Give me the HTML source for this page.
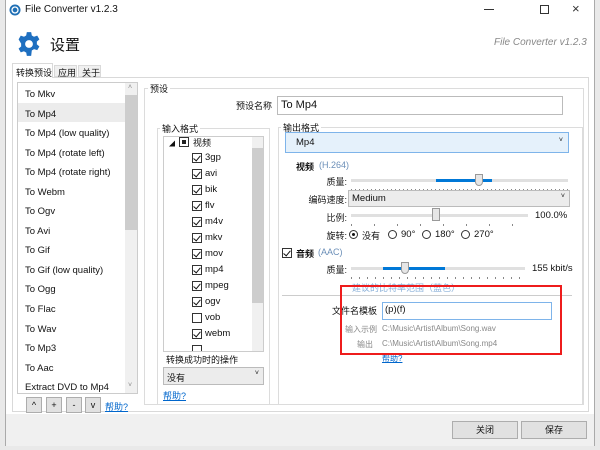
<!DOCTYPE html>
<html><head><meta charset="utf-8"><style>
*{margin:0;padding:0;box-sizing:border-box}
body{width:600px;height:450px;background:#e9e9e9;position:relative;overflow:hidden;font-family:"Liberation Sans","Noto Sans CJK SC",sans-serif;font-size:9px;color:#111}
.a{position:absolute;white-space:nowrap}
.win{position:absolute;left:5px;top:0;width:590px;height:446px;background:#fff;border:1px solid #aaa;border-top:none}
.grp{position:absolute;border:1px solid #dcdcdc}
.lbl{position:absolute;background:#fff;padding:0 2px;font-size:9px}
.chk{position:absolute;width:10px;height:10px;border:1px solid #333;background:#fff}
.chk.on::after{content:"";position:absolute;left:2px;top:0px;width:3px;height:6px;border:solid #111;border-width:0 1.5px 1.5px 0;transform:rotate(40deg)}
.btn{position:absolute;background:#e1e1e1;border:1px solid #adadad;text-align:center;font-size:9px}
.link{color:#0066cc;text-decoration:underline}
.gr{color:#888}
.r{text-align:right}
</style></head><body>
<div class="win"></div>
<svg class="a" style="left:9px;top:4px" width="12" height="12" viewBox="0 0 12 12"><circle cx="6" cy="6" r="5.5" fill="#1f6fb5"/><circle cx="6" cy="6" r="3" fill="none" stroke="#fff" stroke-width="1.3"/></svg>
<div class="a" style="left:25px;top:4px;font-size:10px">File Converter v1.2.3</div>
<div class="a" style="left:484px;top:9px;width:10px;height:1px;background:#333"></div>
<div class="a" style="left:540px;top:5px;width:9px;height:9px;border:1px solid #333"></div>
<div class="a" style="left:572px;top:1px;font-size:13px;color:#333">×</div>
<svg class="a" style="left:16px;top:31px" width="26" height="26" viewBox="0 0 24 24"><path fill="#1e6fc0" d="M10 1h4l.6 3.1a8 8 0 0 1 2 1.2l3-1 2 3.4-2.4 2.1a8 8 0 0 1 0 2.4l2.4 2.1-2 3.4-3-1a8 8 0 0 1-2 1.2L14 23h-4l-.6-3.1a8 8 0 0 1-2-1.2l-3 1-2-3.4 2.4-2.1a8 8 0 0 1 0-2.4L2.4 7.7l2-3.4 3 1a8 8 0 0 1 2-1.2z"/><circle cx="12" cy="12" r="3.6" fill="#fff"/></svg>
<div class="a" style="left:50px;top:34px;font-size:15px">设置</div>
<div class="a" style="left:494px;top:37px;font-size:10px;font-style:italic;color:#888">File Converter v1.2.3</div>
<div class="a" style="left:12px;top:77px;width:577px;height:335px;border:1px solid #d9d9d9"></div>
<div class="a" style="left:12px;top:63px;width:41px;height:15px;border:1px solid #d9d9d9;border-bottom:none;background:#fff;font-size:9px;padding:2px 0 0 3px">转换预设</div>
<div class="a" style="left:54px;top:65px;width:23px;height:12px;border:1px solid #d9d9d9;background:#f0f0f0;font-size:9px;padding:0 0 0 3px">应用</div>
<div class="a" style="left:78px;top:65px;width:23px;height:12px;border:1px solid #d9d9d9;background:#f0f0f0;font-size:9px;padding:0 0 0 3px">关于</div>
<div class="a" style="left:17px;top:82px;width:121px;height:312px;border:1px solid #ccc"></div>
<div class="a" style="left:18px;top:103px;width:107px;height:19px;background:#ececec"></div>
<div class="a" style="left:125px;top:83px;width:12px;height:310px;background:#f0f0f0"></div>
<div class="a" style="left:125px;top:95px;width:12px;height:135px;background:#cdcdcd"></div>
<div class="a gr" style="left:128px;top:84px;font-size:7px">˄</div>
<div class="a gr" style="left:128px;top:382px;font-size:7px">˅</div>
<div class="a" style="left:25px;top:85px;line-height:19.55px;font-size:9.5px">To Mkv<br>To Mp4<br>To Mp4 (low quality)<br>To Mp4 (rotate left)<br>To Mp4 (rotate right)<br>To Webm<br>To Ogv<br>To Avi<br>To Gif<br>To Gif (low quality)<br>To Ogg<br>To Flac<br>To Wav<br>To Mp3<br>To Aac<br>Extract DVD to Mp4</div>
<div class="btn" style="left:26px;top:397px;width:16px;height:16px;line-height:14px">^</div>
<div class="btn" style="left:46px;top:397px;width:16px;height:16px;line-height:14px">+</div>
<div class="btn" style="left:66px;top:397px;width:16px;height:16px;line-height:14px">-</div>
<div class="btn" style="left:85px;top:397px;width:16px;height:16px;line-height:14px">v</div>
<div class="a link" style="left:105px;top:400px">帮助?</div>
<div class="grp" style="left:144px;top:88px;width:440px;height:317px"></div>
<div class="lbl" style="left:148px;top:82px">预设</div>
<div class="a" style="left:236px;top:99px;font-size:9px">预设名称</div>
<div class="a" style="left:277px;top:96px;width:286px;height:19px;border:1px solid #bbb;font-size:11px;padding:2px 0 0 3px">To Mp4</div>
<div class="grp" style="left:157px;top:128px;width:113px;height:277px"></div>
<div class="lbl" style="left:160px;top:122px">输入格式</div>
<div class="a" style="left:163px;top:136px;width:101px;height:216px;border:1px solid #ccc;overflow:hidden"></div>
<div class="a" style="left:252px;top:137px;width:11px;height:214px;background:#f0f0f0"></div>
<div class="a" style="left:252px;top:148px;width:11px;height:155px;background:#cdcdcd"></div>
<div class="a" style="left:169px;top:139px;font-size:6px">◢</div>
<div class="a" style="left:179px;top:137px;width:10px;height:10px;border:1px solid #333"><div style="margin:2px;width:4px;height:4px;background:#222"></div></div>
<div class="a" style="left:193px;top:136px;font-size:9px">视频</div>
<div class="chk on" style="left:192px;top:153px"></div><div class="a" style="left:205px;top:152px;font-size:9.5px">3gp</div>
<div class="chk on" style="left:192px;top:169px"></div><div class="a" style="left:205px;top:168px;font-size:9.5px">avi</div>
<div class="chk on" style="left:192px;top:185px"></div><div class="a" style="left:205px;top:184px;font-size:9.5px">bik</div>
<div class="chk on" style="left:192px;top:201px"></div><div class="a" style="left:205px;top:200px;font-size:9.5px">flv</div>
<div class="chk on" style="left:192px;top:217px"></div><div class="a" style="left:205px;top:216px;font-size:9.5px">m4v</div>
<div class="chk on" style="left:192px;top:233px"></div><div class="a" style="left:205px;top:232px;font-size:9.5px">mkv</div>
<div class="chk on" style="left:192px;top:249px"></div><div class="a" style="left:205px;top:248px;font-size:9.5px">mov</div>
<div class="chk on" style="left:192px;top:265px"></div><div class="a" style="left:205px;top:264px;font-size:9.5px">mp4</div>
<div class="chk on" style="left:192px;top:281px"></div><div class="a" style="left:205px;top:280px;font-size:9.5px">mpeg</div>
<div class="chk on" style="left:192px;top:297px"></div><div class="a" style="left:205px;top:296px;font-size:9.5px">ogv</div>
<div class="chk" style="left:192px;top:313px"></div><div class="a" style="left:205px;top:312px;font-size:9.5px">vob</div>
<div class="chk on" style="left:192px;top:329px"></div><div class="a" style="left:205px;top:328px;font-size:9.5px">webm</div>
<div class="a" style="left:192px;top:345px;width:10px;height:6px;border:1px solid #333;border-bottom:none"></div>
<div class="a" style="left:166px;top:353px;font-size:9px">转换成功时的操作</div>
<div class="a" style="left:163px;top:367px;width:101px;height:18px;border:1px solid #bbb;background:#ececec;font-size:9px;padding:3px 0 0 3px">没有<span style="position:absolute;right:4px;top:2px;font-size:7px">˅</span></div>
<div class="a link" style="left:163px;top:389px">帮助?</div>
<div class="grp" style="left:278px;top:127px;width:305px;height:278px"></div>
<div class="lbl" style="left:281px;top:121px">输出格式</div>
<div class="a" style="left:285px;top:132px;width:284px;height:21px;border:1px solid #7eb4ea;background:#e5f1fb;font-size:9.5px;padding:4px 0 0 10px">Mp4<span style="position:absolute;right:5px;top:4px;font-size:7px">˅</span></div>
<div class="a" style="left:296px;top:160px;font-size:9px;font-weight:bold">视频</div>
<div class="a" style="left:319px;top:160px;font-size:9px;color:#6b8fb8">(H.264)</div>
<div class="a r" style="left:300px;top:175px;width:47px">质量:</div>
<div class="a" style="left:351px;top:179px;width:217px;height:3px;background:#e0e0e0"></div>
<div class="a" style="left:436px;top:179px;width:56px;height:3px;background:#0078d7"></div>
<div class="a" style="left:475px;top:174px;width:8px;height:12px;background:#e6e6e6;border:1px solid #999;border-radius:0 0 4px 4px"></div>
<div class="a" style="left:351px;top:189px;width:217px;height:2px;background:repeating-linear-gradient(90deg,#888 0 1px,transparent 1px 4px)"></div>
<div class="a r" style="left:290px;top:193px;width:57px">编码速度:</div>
<div class="a" style="left:348px;top:190px;width:222px;height:17px;border:1px solid #bbb;background:#ececec;font-size:9.5px;padding:2px 0 0 3px">Medium<span style="position:absolute;right:4px;top:2px;font-size:7px">˅</span></div>
<div class="a r" style="left:300px;top:211px;width:47px">比例:</div>
<div class="a" style="left:351px;top:214px;width:177px;height:3px;background:#e0e0e0"></div>
<div class="a" style="left:432px;top:208px;width:8px;height:13px;background:#e6e6e6;border:1px solid #999"></div>
<div class="a" style="left:351px;top:224px;width:177px;height:2px;background:repeating-linear-gradient(90deg,#888 0 1px,transparent 1px 23px)"></div>
<div class="a" style="left:535px;top:210px;font-size:9.5px">100.0%</div>
<div class="a r" style="left:300px;top:229px;width:47px">旋转:</div>
<div class="a" style="left:349px;top:230px;width:9px;height:9px;border:1px solid #333;border-radius:50%"><div style="margin:2px;width:3px;height:3px;border-radius:50%;background:#111"></div></div>
<div class="a" style="left:362px;top:229px">没有</div>
<div class="a" style="left:388px;top:230px;width:9px;height:9px;border:1px solid #333;border-radius:50%"></div><div class="a" style="left:401px;top:229px;font-size:9.5px">90°</div>
<div class="a" style="left:422px;top:230px;width:9px;height:9px;border:1px solid #333;border-radius:50%"></div><div class="a" style="left:435px;top:229px;font-size:9.5px">180°</div>
<div class="a" style="left:461px;top:230px;width:9px;height:9px;border:1px solid #333;border-radius:50%"></div><div class="a" style="left:474px;top:229px;font-size:9.5px">270°</div>
<div class="chk on" style="left:282px;top:248px"></div>
<div class="a" style="left:296px;top:247px;font-weight:bold">音频</div>
<div class="a" style="left:318px;top:247px;color:#6b8fb8">(AAC)</div>
<div class="a r" style="left:300px;top:263px;width:47px">质量:</div>
<div class="a" style="left:351px;top:267px;width:174px;height:3px;background:#e0e0e0"></div>
<div class="a" style="left:383px;top:267px;width:62px;height:3px;background:#0078d7"></div>
<div class="a" style="left:401px;top:262px;width:8px;height:12px;background:#e6e6e6;border:1px solid #999;border-radius:0 0 4px 4px"></div>
<div class="a" style="left:351px;top:277px;width:174px;height:2px;background:repeating-linear-gradient(90deg,#888 0 1px,transparent 1px 8px)"></div>
<div class="a" style="left:532px;top:263px;font-size:9.5px">155 kbit/s</div>
<div class="a" style="left:352px;top:281px;color:#8ab0d8;font-size:9px">建议的比特率范围（蓝色）</div>
<div class="a" style="left:282px;top:295px;width:290px;height:1px;background:#ccc"></div>
<div class="a" style="left:332px;top:304px">文件名模板</div>
<div class="a" style="left:382px;top:302px;width:170px;height:18px;border:1px solid #7eb4ea;font-size:9.5px;padding:1px 0 0 2px">(p)(f)</div>
<div class="a gr" style="left:345px;top:324px;font-size:8px">输入示例</div>
<div class="a gr" style="left:382px;top:324px;font-size:8px">C:\Music\Artist\Album\Song.wav</div>
<div class="a gr" style="left:357px;top:339px;font-size:8px">输出</div>
<div class="a gr" style="left:382px;top:339px;font-size:8px">C:\Music\Artist\Album\Song.mp4</div>
<div class="a link" style="left:382px;top:353px;font-size:8px">帮助?</div>
<div class="a" style="left:340px;top:285px;width:222px;height:70px;border:2px solid #ee1c1c"></div>
<div class="a" style="left:6px;top:414px;width:588px;height:32px;background:#f0f0f0"></div>
<div class="btn" style="left:452px;top:421px;width:66px;height:18px;line-height:16px">关闭</div>
<div class="btn" style="left:521px;top:421px;width:66px;height:18px;line-height:16px">保存</div>
</body></html>
